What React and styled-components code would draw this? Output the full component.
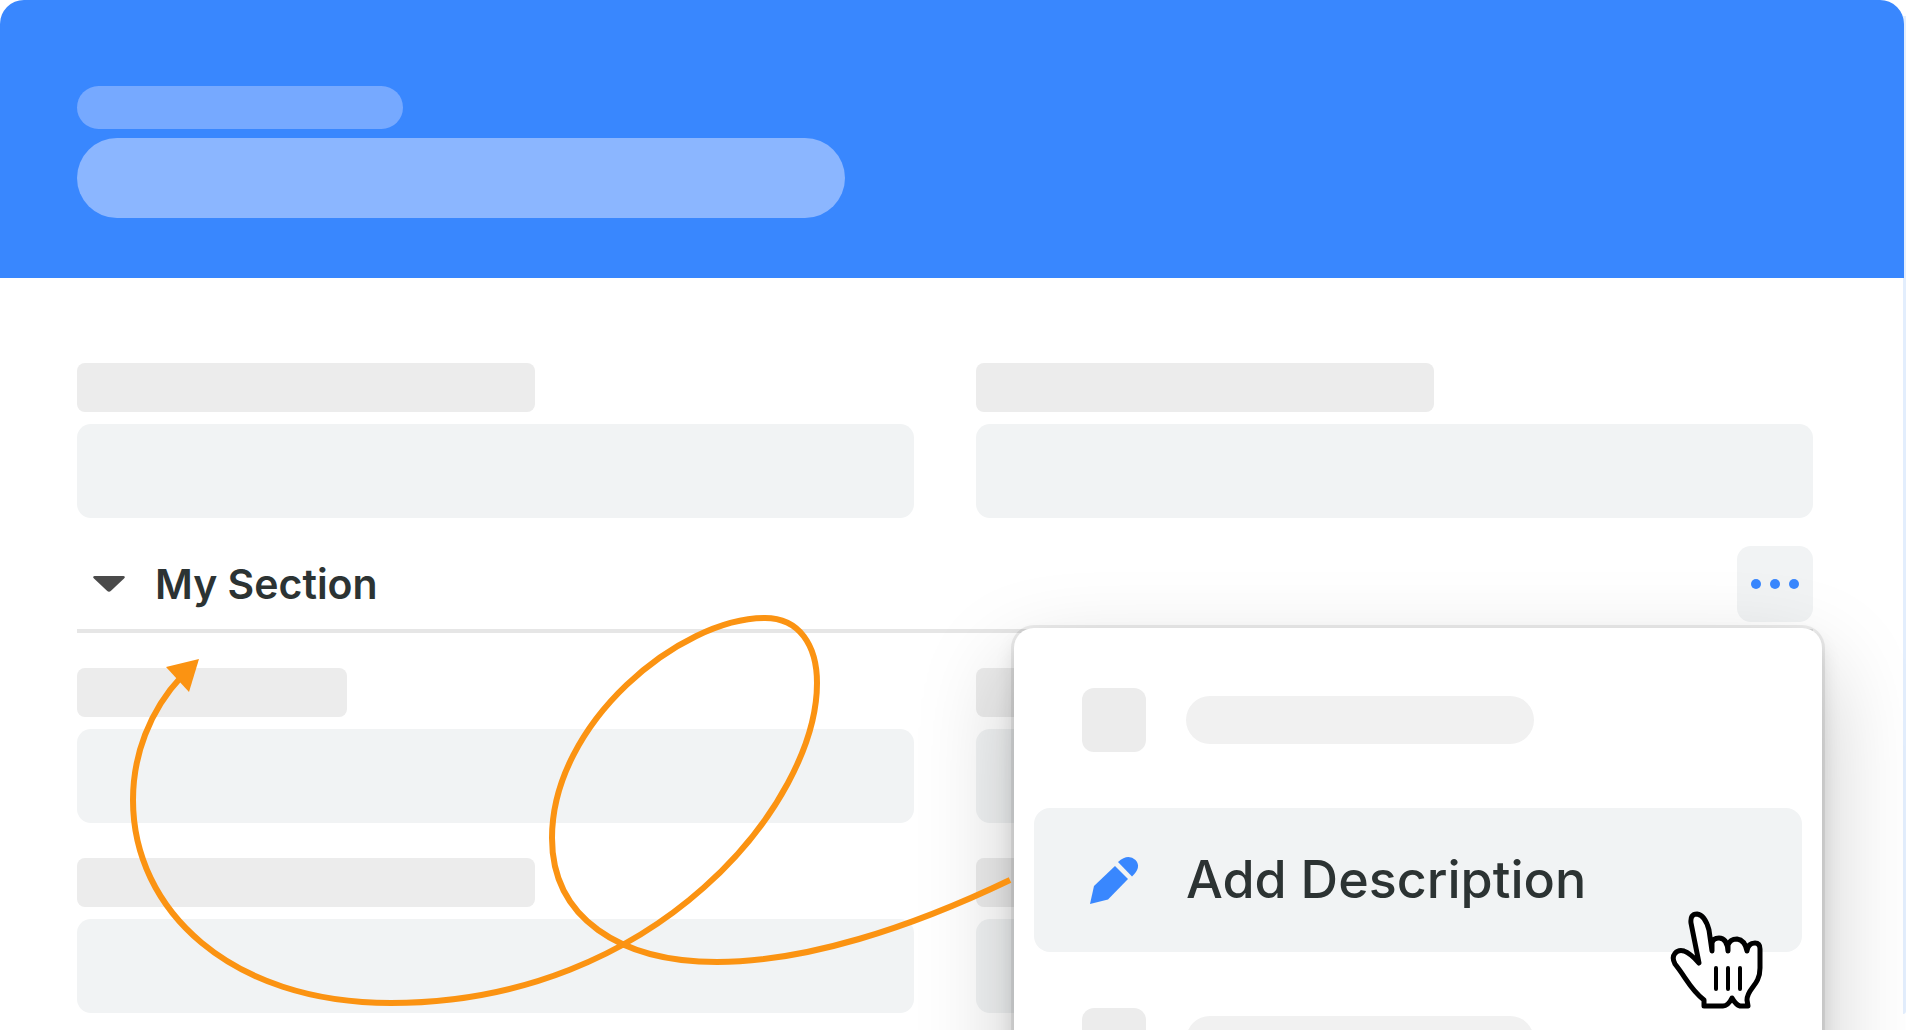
import React from "react";
import styled, { createGlobalStyle } from "styled-components";

const GlobalStyle = createGlobalStyle`
  * { box-sizing: border-box; }
  body { margin: 0; background: #fff; font-family: Inter, "Liberation Sans", sans-serif; }
`;

const Frame = styled.div`
  position: relative;
  height: 100vh;
  overflow: hidden;
  padding-right: 2px;
`;

const EdgeLine = styled.div`
  position: absolute;
  top: 16px;
  right: 0;
  bottom: 16px;
  width: 3px;
  border-radius: 0 0 3px 0;
  background: #e3eefd;
`;

const Banner = styled.header`
  position: relative;
  display: flex;
  flex-direction: column;
  gap: 9px;
  height: 278px;
  padding: 86px 77px 0;
  border-radius: 24px 24px 0 0;
  background: #3987fe;
`;

const Pill = styled.div`
  width: ${(p) => p.$width}px;
  height: ${(p) => p.$height}px;
  border-radius: 40px;
  background: ${(p) => p.$color};
`;

const Content = styled.main`
  padding: 85px 91px 0 77px;
`;

const FieldGrid = styled.div`
  display: grid;
  grid-template-columns: 1fr 1fr;
  gap: 35px 62px;
`;

const Field = styled.div`
  display: grid;
  gap: 12px;
`;

const FieldLabel = styled.div`
  width: ${(p) => p.$width}px;
  height: 49px;
  border-radius: 8px;
  background: #ececec;
`;

const FieldBox = styled.div`
  height: 94px;
  border-radius: 14px;
  background: #f1f3f4;
`;

const SectionHeader = styled.div`
  display: flex;
  align-items: center;
  justify-content: space-between;
  margin: 28px 0 35px;
  padding-bottom: 7px;
  border-bottom: 4px solid #e6e6e6;
`;

const SectionToggle = styled.button`
  display: flex;
  align-items: center;
  gap: 30px;
  padding: 0 16px;
  border: 0;
  background: none;
  color: #2c3333;
  font: 600 41px/52px Inter, "Liberation Sans", sans-serif;
`;

const MoreButton = styled.button`
  display: flex;
  align-items: center;
  justify-content: center;
  width: 76px;
  height: 76px;
  padding: 0;
  border: 0;
  border-radius: 14px;
  background: #f1f3f4;
`;

const Menu = styled.div`
  position: absolute;
  top: 628px;
  right: 84px;
  display: grid;
  gap: 16px;
  width: 808px;
  padding: 20px;
  border-radius: 20px;
  background: #fff;
  box-shadow: 0 0 0 3px rgba(0, 0, 0, 0.07), 0 12px 20px rgba(0, 0, 0, 0.12),
    0 40px 96px rgba(0, 0, 0, 0.22);
`;

const MenuItem = styled.button`
  display: flex;
  align-items: center;
  gap: 40px;
  height: 144px;
  padding: 0 48px;
  border: 0;
  border-radius: 16px;
  background: ${(p) => (p.$active ? "#f1f3f4" : "transparent")};
  color: #2c3333;
  font: 500 52px/62px Inter, "Liberation Sans", sans-serif;
`;

const IconBlock = styled.span`
  width: 64px;
  height: 64px;
  border-radius: 12px;
  background: #ececec;
`;

const TextBlock = styled.span`
  width: 348px;
  height: 48px;
  border-radius: 24px;
  background: #f1f1f1;
`;

const Arrow = styled.svg`
  position: absolute;
  top: 600px;
  left: 120px;
  pointer-events: none;
`;

const Cursor = styled.svg`
  position: absolute;
  top: 908px;
  right: 140px;
  pointer-events: none;
`;

function PlaceholderField({ labelWidth }) {
  return (
    <Field>
      <FieldLabel $width={labelWidth} />
      <FieldBox />
    </Field>
  );
}

function PlaceholderItem() {
  return (
    <MenuItem type="button" role="menuitem">
      <IconBlock />
      <TextBlock />
    </MenuItem>
  );
}

export default function App() {
  return (
    <Frame>
      <GlobalStyle />
      <EdgeLine />
      <Banner>
        <Pill $width={326} $height={43} $color="#76a9ff" />
        <Pill $width={768} $height={80} $color="#8bb6ff" />
      </Banner>
      <Content>
        <FieldGrid>
          <PlaceholderField labelWidth={458} />
          <PlaceholderField labelWidth={458} />
        </FieldGrid>
        <SectionHeader>
          <SectionToggle type="button" aria-expanded="true">
            <svg width="32" height="16" viewBox="0 0 32 16" aria-hidden="true">
              <path d="M1.500 0H30.500Q33 0.500 31 2.500L18 14.800Q16 16.500 14 14.800L1 2.500Q-1 0.500 1.500 0Z" fill="#4a4a4a" />
            </svg>
            My Section
          </SectionToggle>
          <MoreButton type="button" aria-label="Section options">
            <svg width="50" height="10" viewBox="0 0 50 10" fill="#3987fe" aria-hidden="true">
              <circle cx="6" cy="5" r="5" />
              <circle cx="25" cy="5" r="5" />
              <circle cx="44" cy="5" r="5" />
            </svg>
          </MoreButton>
        </SectionHeader>
        <FieldGrid>
          <PlaceholderField labelWidth={270} />
          <PlaceholderField labelWidth={270} />
          <PlaceholderField labelWidth={458} />
          <PlaceholderField labelWidth={458} />
        </FieldGrid>
      </Content>
      <Menu role="menu">
        <PlaceholderItem />
        <MenuItem type="button" role="menuitem" $active>
          <svg width="64" height="64" viewBox="0 0 64 64" fill="#3987fe" aria-hidden="true">
            <path d="M8 56L12 38L33 18L46 31L26 51.500Z" />
            <path d="M36 14Q46 5 53.500 12Q60 19 50 28.500Z" />
          </svg>
          Add Description
        </MenuItem>
        <PlaceholderItem />
      </Menu>
      <Arrow width="900" height="430" viewBox="120 600 900 430" aria-hidden="true">
        <path
          d="M1010 880C910 928 805 962 717 962C620 962 552 918 552 838C552 723 680 618 765 618C799 618 817 645 817 683C817 802 657 1003 391 1003C230 1003 133 910 133 800C133 756 149 711 182 676"
          fill="none"
          stroke="#fb9312"
          strokeWidth="6"
        />
        <path d="M199 659L166 667L189 692Z" fill="#fb9312" />
      </Arrow>
      <Cursor width="96" height="104" viewBox="1670 908 96 104" aria-hidden="true">
        <path
          d="M1699 963L1691 923Q1690 914 1697 914Q1705 915 1709 930L1712 951V943Q1713 938 1719 938Q1727 938 1728 951V945Q1730 939 1737 939Q1745 940 1747 951Q1748 943 1755 943Q1760 943 1760 949V968C1760 986 1747 988 1747 1000L1748 1006H1740Q1736 1005 1732 998Q1728 1006 1723 1006H1704V1000C1690 989 1687 979 1675 964C1670 955 1677 949 1684 951Q1690 953 1699 963Z"
          fill="#fff"
          stroke="#000"
          strokeWidth="5"
          strokeLinejoin="round"
        />
        <path d="M1716 968V989M1728 968V989M1740 968V989" stroke="#000" strokeWidth="4" strokeLinecap="round" />
      </Cursor>
    </Frame>
  );
}
